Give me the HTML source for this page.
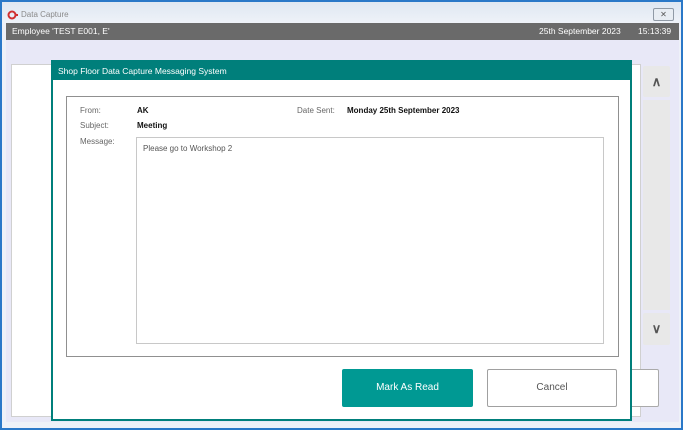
<!DOCTYPE html>
<html><head><style>
*{margin:0;padding:0;box-sizing:border-box}
body{width:683px;height:430px;overflow:hidden;background:#e6ecf5;font-family:"Liberation Sans",Arial,sans-serif;position:relative}
.abs{position:absolute}
</style></head><body>
<div class="abs" style="left:0;top:0;width:683px;height:430px;border:2px solid #2a78c8;background:#eef1f8"></div>
<div class="abs" style="left:2px;top:2px;width:679px;height:21px;background:linear-gradient(#dfe7f2,#eef2f8)"></div>
<svg class="abs" style="left:7px;top:10px" width="12" height="10"><circle cx="5" cy="5" r="3.5" fill="none" stroke="#d03030" stroke-width="2"/><path d="M8 5 L11 5" stroke="#d03030" stroke-width="2"/></svg>
<div class="abs" style="left:21px;top:10px;font-size:8px;color:#8a8a8a">Data Capture</div>
<div class="abs" style="left:653px;top:8px;width:21px;height:13px;border:1px solid #909aa6;border-radius:2px;background:#e8edf3;font-size:8px;color:#555;text-align:center;line-height:11px">✕</div>
<div class="abs" style="left:6px;top:23px;width:673px;height:17px;background:#6a6a6a;color:#fff;font-size:8.5px;line-height:17px">
<span class="abs" style="left:6px">Employee 'TEST E001, E'</span>
<span class="abs" style="left:533px">25th September 2023</span>
<span class="abs" style="left:632px">15:13:39</span></div>
<div class="abs" style="left:6px;top:40px;width:673px;height:382px;background:#e8e8f7"></div>
<div class="abs" style="left:11px;top:64px;width:630px;height:353px;background:#fff;border:1px solid #d0d0d0"></div>
<div class="abs" style="left:643px;top:66px;width:27px;height:31px;background:#e8e8e8;border-radius:2px;font-size:13px;color:#555;text-align:center;line-height:31px;font-weight:bold">&#8743;</div>
<div class="abs" style="left:643px;top:100px;width:27px;height:210px;background:#e8e8e8"></div>
<div class="abs" style="left:643px;top:313px;width:27px;height:32px;background:#e8e8e8;border-radius:2px;font-size:13px;color:#555;text-align:center;line-height:32px;font-weight:bold">&#8744;</div>
<div class="abs" style="left:600px;top:369px;width:59px;height:38px;background:#fff;border:1px solid #aaa;border-radius:2px"></div>
<div class="abs" style="left:51px;top:60px;width:581px;height:361px;background:#007f7b"></div>
<div class="abs" style="left:58px;top:66px;font-size:8.5px;color:#fff">Shop Floor Data Capture Messaging System</div>
<div class="abs" style="left:53px;top:80px;width:577px;height:339px;background:#fff"></div>
<div class="abs" style="left:66px;top:96px;width:553px;height:261px;border:1px solid #909090"></div>
<div class="abs" style="left:80px;top:106px;font-size:8px;color:#666">From:</div>
<div class="abs" style="left:80px;top:121px;font-size:8px;color:#666">Subject:</div>
<div class="abs" style="left:80px;top:137px;font-size:8px;color:#666">Message:</div>
<div class="abs" style="left:137px;top:106px;font-size:8px;font-weight:bold;color:#111">AK</div>
<div class="abs" style="left:137px;top:121px;font-size:8px;font-weight:bold;color:#111">Meeting</div>
<div class="abs" style="left:297px;top:106px;font-size:8px;color:#666">Date Sent:</div>
<div class="abs" style="left:347px;top:106px;font-size:8px;font-weight:bold;color:#111">Monday 25th September 2023</div>
<div class="abs" style="left:136px;top:137px;width:468px;height:207px;border:1px solid #c8c8c8;background:#fff"></div>
<div class="abs" style="left:143px;top:144px;font-size:8px;color:#555">Please go to Workshop 2</div>
<div class="abs" style="left:342px;top:369px;width:131px;height:38px;background:#009993;border-radius:2px;color:#fff;font-size:10px;text-align:center;line-height:38px">Mark As Read</div>
<div class="abs" style="left:487px;top:369px;width:130px;height:38px;background:#fff;border:1px solid #a0a0a0;border-radius:2px;color:#555;font-size:10px;text-align:center;line-height:36px">Cancel</div>
</body></html>
